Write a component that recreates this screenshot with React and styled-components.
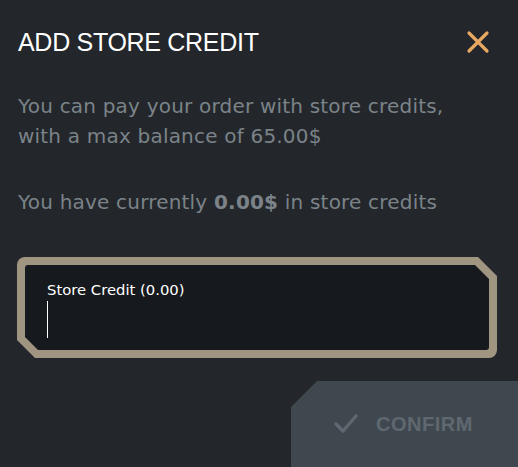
import React from 'react';
import styled, { createGlobalStyle } from 'styled-components';

const GlobalStyle = createGlobalStyle`
  html, body {
    margin: 0;
    padding: 0;
    background: #23272b;
    height: 100%;
    overflow: hidden;
  }
  #root {
    height: 100%;
  }
`;

const Modal = styled.div`
  box-sizing: border-box;
  height: 467px;
  padding: 26px 0 0 18px;
  font-family: 'Liberation Sans', Arial, sans-serif;
  display: flex;
  flex-direction: column;
`;

const Header = styled.div`
  display: flex;
  align-items: center;
  justify-content: space-between;
  padding-right: 28px;
  height: 32px;
`;

const Title = styled.h1`
  margin: 0;
  font-size: 25px;
  font-weight: 400;
  color: #ffffff;
  letter-spacing: -0.3px;
`;

const CloseButton = styled.button`
  border: 0;
  background: none;
  padding: 0;
  width: 24px;
  height: 24px;
  cursor: pointer;
  display: flex;
`;

const Text = styled.p`
  margin: ${({ top }) => top}px 0 0;
  font-family: 'DejaVu Sans', Verdana, sans-serif;
  font-size: 20px;
  line-height: 30px;
  color: #7b8389;
  letter-spacing: 0.2px;

  b {
    font-weight: 700;
  }
`;

const InputFrame = styled.div`
  margin: 40px 21px 0 -1px;
  padding: 8px;
  background: #a09580;
  height: 101px;
  box-sizing: border-box;
  border-radius: 8px;
  clip-path: polygon(0 0, calc(100% - 19px) 0, 100% 19px, 100% 100%, 18px 100%, 0 calc(100% - 18px));
`;

const InputInner = styled.div`
  height: 100%;
  background: #16191d;
  box-sizing: border-box;
  padding: 16px 22px;
  border-radius: 3px;
  clip-path: polygon(0 0, calc(100% - 14px) 0, 100% 14px, 100% 100%, 13px 100%, 0 calc(100% - 13px));
`;

const Label = styled.div`
  color: #ffffff;
  font-family: 'DejaVu Sans', Verdana, sans-serif;
  font-size: 14.8px;
  line-height: 18px;
`;

const Caret = styled.div`
  width: 1px;
  height: 37px;
  background: #ffffff;
  margin-top: 2px;
`;

const Footer = styled.div`
  margin-top: auto;
  display: flex;
  justify-content: flex-end;
`;

const ConfirmButton = styled.button`
  width: 227px;
  height: 86px;
  border: 0;
  background: #3f474f;
  color: #5f686f;
  font-family: 'Liberation Sans', Arial, sans-serif;
  font-size: 20px;
  font-weight: 700;
  display: flex;
  align-items: flex-start;
  padding: 32px 0 0 43px;
  gap: 18px;
  box-sizing: border-box;
  border-top-left-radius: 12px;
  clip-path: polygon(0 26px, 26px 0, 100% 0, 100% 100%, 0 100%);
  letter-spacing: 0.5px;
`;

const App = () => (
  <>
    <GlobalStyle />
    <Modal>
      <Header>
        <Title>ADD STORE CREDIT</Title>
        <CloseButton aria-label="Close">
          <svg width="24" height="24" viewBox="0 0 24 24">
            <path d="M3 3 L21 21 M21 3 L3 21" stroke="#e9a862" strokeWidth="3.2" strokeLinecap="round" />
          </svg>
        </CloseButton>
      </Header>
      <Text top={33}>
        You can pay your order with store credits,
        <br />
        with a max balance of 65.00$
      </Text>
      <Text top={36}>
        You have currently <b>0.00$</b> in store credits
      </Text>
      <InputFrame>
        <InputInner>
          <Label>Store Credit (0.00)</Label>
          <Caret />
        </InputInner>
      </InputFrame>
      <Footer>
        <ConfirmButton>
          <svg width="24" height="22" viewBox="0 0 24 22">
            <path d="M2 11 L9 18 L22 3" fill="none" stroke="#5f686f" strokeWidth="3.4" strokeLinecap="round" strokeLinejoin="round" />
          </svg>
          CONFIRM
        </ConfirmButton>
      </Footer>
    </Modal>
  </>
);

export default App;
